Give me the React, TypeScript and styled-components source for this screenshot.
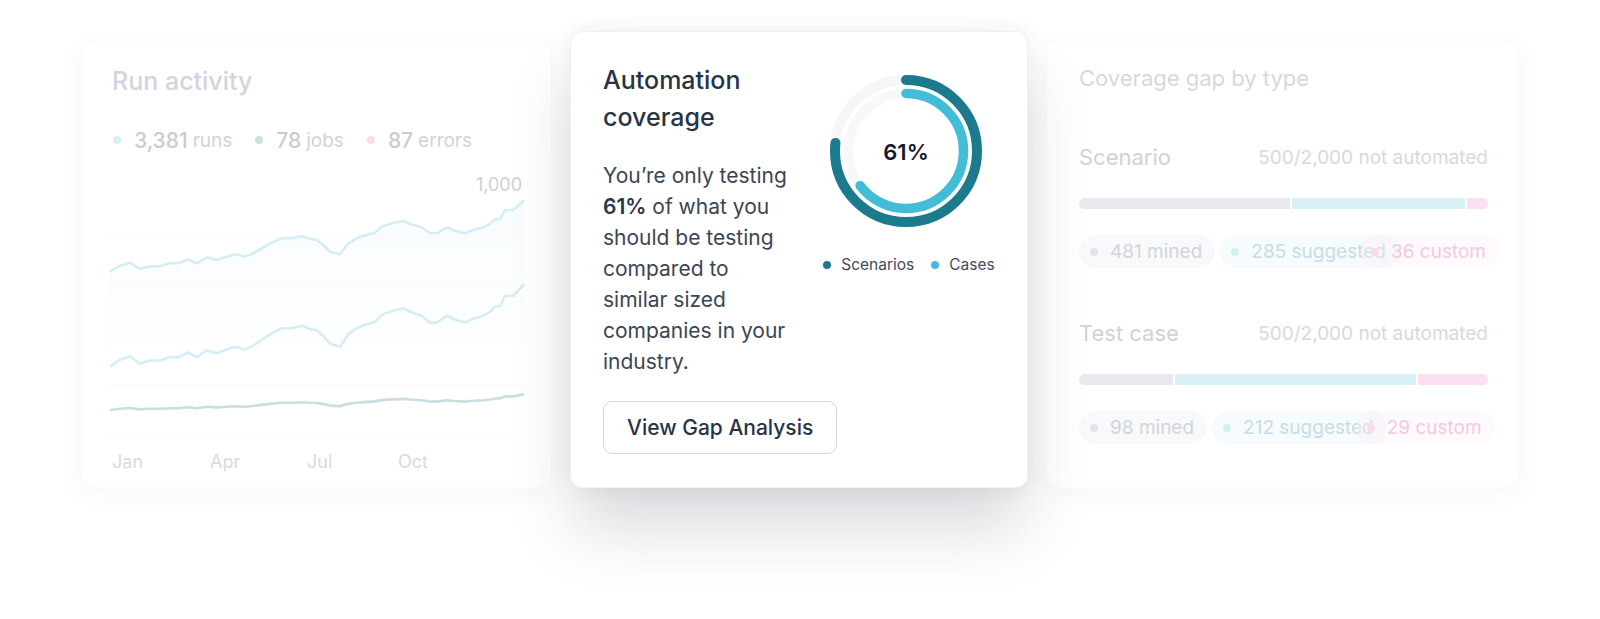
import React from 'react';
import styled, { createGlobalStyle } from 'styled-components';

const GlobalStyle = createGlobalStyle`
  body {
    margin: 0;
    background: #ffffff;
    font-family: Inter, 'Noto Sans', sans-serif;
  }
`;

// chart points traced from the design, in a 3x grid
const runsTrace: [number, number][] = [
  [120, 695], [150, 677], [180, 668], [210, 687], [240, 679], [270, 679], [300, 670],
  [325, 670], [355, 658], [380, 670], [410, 652], [440, 660], [470, 650], [495, 643],
  [525, 650], [550, 640], [575, 625], [605, 608], [635, 595], [665, 595], [695, 588],
  [720, 597], [740, 600], [760, 615], [780, 635], [810, 643], [835, 610], [860, 595],
  [880, 587], [915, 578], [935, 560], [965, 550], [1000, 543], [1030, 555], [1055, 562],
  [1080, 580], [1100, 580], [1130, 562], [1155, 572], [1185, 580], [1210, 570],
  [1240, 562], [1260, 552], [1275, 538], [1290, 538], [1305, 510], [1330, 510], [1362, 480],
];

const toLocal = (zx: number, zy: number) => [zx / 3 - 40, zy / 3 - 156];

const buildPath = (base: number, scale: number) =>
  runsTrace
    .map(([zx, zy], i) => {
      const [x, y] = toLocal(zx, base - (695 - zy) * scale);
      return `${i ? 'L' : 'M'}${x.toFixed(1)},${y.toFixed(1)}`;
    })
    .join(' ');

const topLine = buildPath(695, 1);
const midLine = buildPath(980, 1.15);
const lowLine = buildPath(1110, 0.22);
const areaPath = `${topLine} L414,244 L0,244 Z`;

const gaps = [
  {
    name: 'Scenario',
    segments: [212, 173, 21],
    pills: ['481 mined', '285 suggested', '36 custom'],
    overlap: 44,
  },
  {
    name: 'Test case',
    segments: [94, 242, 70],
    pills: ['98 mined', '212 suggested', '29 custom'],
    overlap: 36,
  },
];

const pillTones = [
  { bg: '#f8f9fa', dot: '#e2e4e8', text: '#d2d5da' },
  { bg: '#f6fbfd', dot: '#d5eff6', text: '#c9dce3' },
  { bg: 'rgba(253, 236, 246, 0.3)', dot: '#fbd9ec', text: '#f5c8e1' },
];

const barTones = ['#e8e9ed', '#d8f1f7', '#fcdff0'];

const App = () => {
  return (
    <>
      <GlobalStyle />
      <Stage>
        <Card $width={472} $height={448}>
          <RunBody>
            <SideTitle>Run activity</SideTitle>
            <StatRow>
              <Stat>
                <Dot $color='#d5f0f6' />
                <StatValue>3,381</StatValue>
                <StatUnit>runs</StatUnit>
              </Stat>
              <Stat>
                <Dot $color='#cfe0e4' />
                <StatValue>78</StatValue>
                <StatUnit>jobs</StatUnit>
              </Stat>
              <Stat>
                <Dot $color='#fcdcdc' />
                <StatValue>87</StatValue>
                <StatUnit>errors</StatUnit>
              </Stat>
            </StatRow>
            <ScaleLabel>1,000</ScaleLabel>
            <ChartSvg width={414} height={244} viewBox='0 0 414 244'>
              <defs>
                <linearGradient id='runsFill' x1='0' y1='0' x2='0' y2='1'>
                  <stop offset='0%' stopColor='#f4f9fb' stopOpacity='0.7' />
                  <stop offset='100%' stopColor='#ffffff' stopOpacity='0' />
                </linearGradient>
              </defs>
              {[41, 89, 140, 189, 239].map((y) => (
                <line key={y} x1={0} x2={414} y1={y} y2={y} stroke='#f9f9fa' strokeWidth={1} />
              ))}
              <path d={areaPath} fill='url(#runsFill)' />
              <path d={topLine} fill='none' stroke='#d3eff5' strokeWidth={2.6} strokeLinejoin='round' />
              <path d={midLine} fill='none' stroke='#d3eff5' strokeWidth={2.6} strokeLinejoin='round' />
              <path d={lowLine} fill='none' stroke='#c9dde2' strokeWidth={2.6} strokeLinejoin='round' />
            </ChartSvg>
            <AxisRow>
              <span>Jan</span>
              <span>Apr</span>
              <span>Jul</span>
              <span>Oct</span>
            </AxisRow>
          </RunBody>
        </Card>

        <Card $width={458} $height={457} $featured>
          <CoverageBody>
            <CoverageText>
              <CoverageTitle>Automation coverage</CoverageTitle>
              <CoverageCopy>
                You’re only testing <strong>61%</strong> of what you should be testing compared to
                similar sized companies in your industry.
              </CoverageCopy>
              <OutlineButton>View Gap Analysis</OutlineButton>
            </CoverageText>
            <DonutColumn>
              <Donut width={160} height={160} viewBox='0 0 160 160'>
                <circle cx={80} cy={80} r={71} fill='none' stroke='#f5f6f8' strokeWidth={10} />
                <circle cx={80} cy={80} r={57.5} fill='none' stroke='#f7f8fa' strokeWidth={9.5} />
                <circle
                  cx={80}
                  cy={80}
                  r={71}
                  fill='none'
                  stroke='#1b7a8c'
                  strokeWidth={10}
                  strokeLinecap='round'
                  strokeDasharray={`${2 * Math.PI * 71 * 0.767} 1000`}
                  transform='rotate(-90 80 80)'
                />
                <circle
                  cx={80}
                  cy={80}
                  r={57.5}
                  fill='none'
                  stroke='#43bcd7'
                  strokeWidth={9.5}
                  strokeLinecap='round'
                  strokeDasharray={`${2 * Math.PI * 57.5 * 0.646} 1000`}
                  transform='rotate(-90 80 80)'
                />
                <DonutLabel x={80} y={81} textAnchor='middle' dominantBaseline='central'>
                  61%
                </DonutLabel>
              </Donut>
              <DonutLegend>
                <LegendItem>
                  <Dot $color='#1b7a8c' />
                  Scenarios
                </LegendItem>
                <LegendItem>
                  <Dot $color='#43bcd7' />
                  Cases
                </LegendItem>
              </DonutLegend>
            </DonutColumn>
          </CoverageBody>
        </Card>

        <Card $width={474} $height={448}>
          <GapBody>
            <GapTitle>Coverage gap by type</GapTitle>
            <GapList>
              {gaps.map((gap) => (
                <GapSection key={gap.name}>
                  <GapHeader>
                    <GapName>{gap.name}</GapName>
                    <GapCount>500/2,000 not automated</GapCount>
                  </GapHeader>
                  <GapBar>
                    {gap.segments.map((w, i) => (
                      <GapSegment key={i} $color={barTones[i]} style={{ flexGrow: w }} />
                    ))}
                  </GapBar>
                  <PillRow>
                    {gap.pills.map((label, i) => (
                      <Pill
                        key={label}
                        $bg={pillTones[i].bg}
                        $color={pillTones[i].text}
                        $pull={i === 2 ? gap.overlap : 0}
                      >
                        <Dot $color={pillTones[i].dot} />
                        {label}
                      </Pill>
                    ))}
                  </PillRow>
                </GapSection>
              ))}
            </GapList>
          </GapBody>
        </Card>
      </Stage>
    </>
  );
};

const Stage = styled.main`
  display: flex;
  justify-content: center;
  align-items: flex-end;
  gap: 18px;
  height: 488px;
  padding-bottom: 131px;
`;

const Card = styled.section<{ $width: number; $height: number; $featured?: boolean }>`
  position: relative;
  z-index: ${({ $featured }) => ($featured ? 2 : 1)};
  box-sizing: border-box;
  width: ${({ $width }) => $width}px;
  height: ${({ $height }) => $height}px;
  flex-shrink: 0;
  background: #ffffff;
  border-radius: 12px;
  border: 1px solid ${({ $featured }) => ($featured ? '#eef0f2' : '#fafafb')};
  box-shadow: ${({ $featured }) =>
    $featured
      ? '0 44px 64px -4px rgba(30, 36, 52, 0.17), 0 0 22px rgba(30, 36, 52, 0.06)'
      : '0 6px 26px rgba(30, 36, 52, 0.035)'};
`;

const Dot = styled.span<{ $color: string }>`
  display: inline-block;
  width: 8px;
  height: 8px;
  border-radius: 50%;
  background: ${({ $color }) => $color};
  flex-shrink: 0;
`;

/* run activity */

const RunBody = styled.div`
  display: flex;
  flex-direction: column;
  padding: 24px 29px 0 31px;
`;

const SideTitle = styled.h2`
  margin: 0;
  font-size: 25px;
  line-height: 32px;
  font-weight: 500;
  color: #d2d5db;
`;

const StatRow = styled.div`
  display: flex;
  gap: 22px;
  margin-top: 29px;
  height: 28px;
  align-items: center;
`;

const Stat = styled.div`
  display: flex;
  align-items: center;

  ${Dot} {
    margin: 0 13px 0 1px;
  }
`;

const StatValue = styled.span`
  font-size: 21px;
  font-weight: 500;
  color: #c8ccd2;
  margin-right: 5px;
`;

const StatUnit = styled.span`
  font-size: 19px;
  color: #d0d3d9;
`;

const ScaleLabel = styled.div`
  margin-top: 20px;
  text-align: right;
  font-size: 18px;
  line-height: 22px;
  color: #cdd0d5;
`;

const ChartSvg = styled.svg`
  display: block;
  margin-left: -2px;
  overflow: visible;
`;

const AxisRow = styled.div`
  display: grid;
  grid-template-columns: 98px 97px 91px 1fr;
  margin-top: 11px;
  font-size: 18px;
  line-height: 22px;
  color: #d7dadf;
`;

/* automation coverage */

const CoverageBody = styled.div`
  display: flex;
  gap: 23px;
  padding: 30px 31px 0 32px;
`;

const CoverageText = styled.div`
  width: 190px;
  flex-shrink: 0;
`;

const CoverageTitle = styled.h2`
  margin: 0;
  font-size: 25px;
  line-height: 37px;
  font-weight: 500;
  color: #283446;
`;

const CoverageCopy = styled.p`
  margin: 24px 0 0;
  font-size: 21px;
  line-height: 31px;
  color: #3b4557;

  strong {
    font-weight: 600;
    color: #2b3546;
  }
`;

const OutlineButton = styled.button`
  margin-top: 24px;
  height: 53px;
  padding: 0 23px;
  border: 1.5px solid #d3d7de;
  border-radius: 9px;
  background: #ffffff;
  font-family: Inter, 'Noto Sans', sans-serif;
  font-size: 21px;
  font-weight: 500;
  color: #283446;
  white-space: nowrap;
  cursor: pointer;
`;

const DonutColumn = styled.div`
  flex: 1;
  display: flex;
  flex-direction: column;
  align-items: center;
`;

const Donut = styled.svg`
  display: block;
  margin-top: 9px;
`;

const DonutLabel = styled.text`
  font-family: Inter, 'Noto Sans', sans-serif;
  font-size: 22px;
  font-weight: 600;
  fill: #131a2a;
`;

const DonutLegend = styled.div`
  display: flex;
  gap: 17px;
  margin-top: 24px;
  margin-left: 6px;
`;

const LegendItem = styled.span`
  display: flex;
  align-items: center;
  gap: 10px;
  font-size: 15.5px;
  line-height: 20px;
  color: #414b5c;
`;

/* coverage gap */

const GapBody = styled.div`
  padding: 23px 31px 0 32px;
`;

const GapTitle = styled.h2`
  margin: 0;
  font-size: 22px;
  line-height: 28px;
  font-weight: 400;
  color: #d5d8dd;
`;

const GapList = styled.div`
  display: flex;
  flex-direction: column;
  gap: 51px;
  margin-top: 51px;
`;

const GapSection = styled.div`
  display: flex;
  flex-direction: column;
`;

const GapHeader = styled.div`
  display: flex;
  justify-content: space-between;
  align-items: center;
  height: 28px;
`;

const GapName = styled.span`
  font-size: 22px;
  color: #cfd2d8;
`;

const GapCount = styled.span`
  font-size: 19px;
  color: #d6d9dd;
`;

const GapBar = styled.div`
  display: flex;
  gap: 2px;
  height: 11px;
  margin-top: 27px;
  border-radius: 6px;
  overflow: hidden;
`;

const GapSegment = styled.div<{ $color: string }>`
  flex-basis: 0;
  background: ${({ $color }) => $color};
`;

const PillRow = styled.div`
  display: flex;
  gap: 5px;
  margin-top: 26px;
`;

const Pill = styled.span<{ $bg: string; $color: string; $pull: number }>`
  display: flex;
  align-items: center;
  gap: 12px;
  height: 33px;
  padding: 0 13px 0 11px;
  margin-left: ${({ $pull }) => -$pull}px;
  border-radius: 17px;
  background: ${({ $bg }) => $bg};
  font-size: 19px;
  color: ${({ $color }) => $color};
  white-space: nowrap;
`;

export default App;
